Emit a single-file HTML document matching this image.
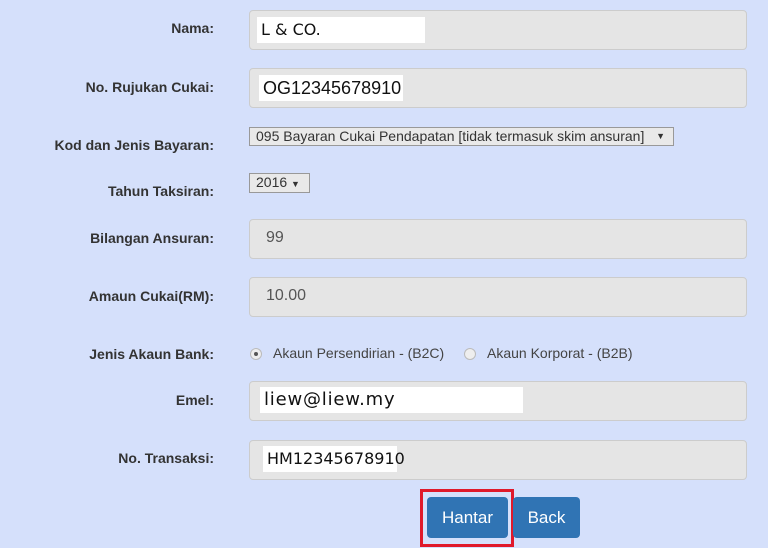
<!DOCTYPE html>
<html><head><style>
body{margin:0;width:768px;height:548px;background:#d5e0fb;font-family:"Liberation Sans",Arial,sans-serif;position:relative;overflow:hidden}
.l{position:absolute;right:554px;font-size:14px;font-weight:bold;color:#333;white-space:nowrap}
.box{position:absolute;left:249px;width:496px;height:38px;background:#e5e5e5;border:1px solid #ccc;border-radius:4px}
.w{position:absolute;background:#fff;font-size:16px;color:#111;line-height:26px;padding-left:4px;font-family:"DejaVu Sans","Liberation Sans",sans-serif;white-space:nowrap}
.v{position:absolute;left:266px;font-size:16px;color:#555}
.sel{position:absolute;left:249px;height:17px;background:#e9e9e9;border:1px solid #999;font-size:14px;color:#333;line-height:17px;padding-left:6px;box-sizing:border-box;white-space:nowrap}
.r{position:absolute;width:12px;height:12px;border-radius:50%;border:1px solid #bbb;background:#eee;box-sizing:border-box}
.t{position:absolute;top:345px;font-size:14px;color:#444}
</style></head><body>
<div class="l" style="top:20px">Nama:</div>
<div class="box" style="top:10px"></div>
<div class="w" style="left:257px;top:17px;width:164px">L &amp; CO.</div>

<div class="l" style="top:79px">No. Rujukan Cukai:</div>
<div class="box" style="top:68px"></div>
<div class="w" style="left:259px;top:75px;width:140px;font-family:'Liberation Sans',sans-serif;font-size:18px">OG12345678910</div>

<div class="l" style="top:137px">Kod dan Jenis Bayaran:</div>
<div class="sel" style="top:127px;width:425px;height:19px">095 Bayaran Cukai Pendapatan [tidak termasuk skim ansuran] <span style="font-size:9px;position:absolute;right:8px">▼</span></div>

<div class="l" style="top:183px">Tahun Taksiran:</div>
<div class="sel" style="top:173px;width:61px;height:20px">2016 <span style="font-size:9px">▼</span></div>

<div class="l" style="top:230px">Bilangan Ansuran:</div>
<div class="box" style="top:219px"></div>
<div class="v" style="top:229px">99</div>

<div class="l" style="top:288px">Amaun Cukai(RM):</div>
<div class="box" style="top:277px"></div>
<div class="v" style="top:287px">10.00</div>

<div class="l" style="top:346px">Jenis Akaun Bank:</div>
<div class="r" style="left:250px;top:348px"><div style="width:4px;height:4px;border-radius:50%;background:#555;margin:3px"></div></div>
<div class="t" style="left:273px">Akaun Persendirian - (B2C)</div>
<div class="r" style="left:464px;top:348px"></div>
<div class="t" style="left:487px">Akaun Korporat - (B2B)</div>

<div class="l" style="top:392px">Emel:</div>
<div class="box" style="top:381px"></div>
<div class="w" style="left:260px;top:387px;width:259px;font-size:18px;letter-spacing:0.8px">liew@liew.my</div>

<div class="l" style="top:450px">No. Transaksi:</div>
<div class="box" style="top:440px"></div>
<div style="position:absolute;left:263px;top:446px;width:134px;height:26px;background:#fff"></div>
<div class="w" style="left:263px;top:446px;background:transparent">HM12345678910</div>

<div style="position:absolute;left:420px;top:489px;width:88px;height:52px;border:3px solid #e0192b"></div>
<div style="position:absolute;left:427px;top:497px;width:81px;height:41px;background:#3074b4;border-radius:4px;color:#fff;font-size:17px;line-height:41px;text-align:center">Hantar</div>
<div style="position:absolute;left:513px;top:497px;width:67px;height:41px;background:#3074b4;border-radius:4px;color:#fff;font-size:17px;line-height:41px;text-align:center">Back</div>
</body></html>
